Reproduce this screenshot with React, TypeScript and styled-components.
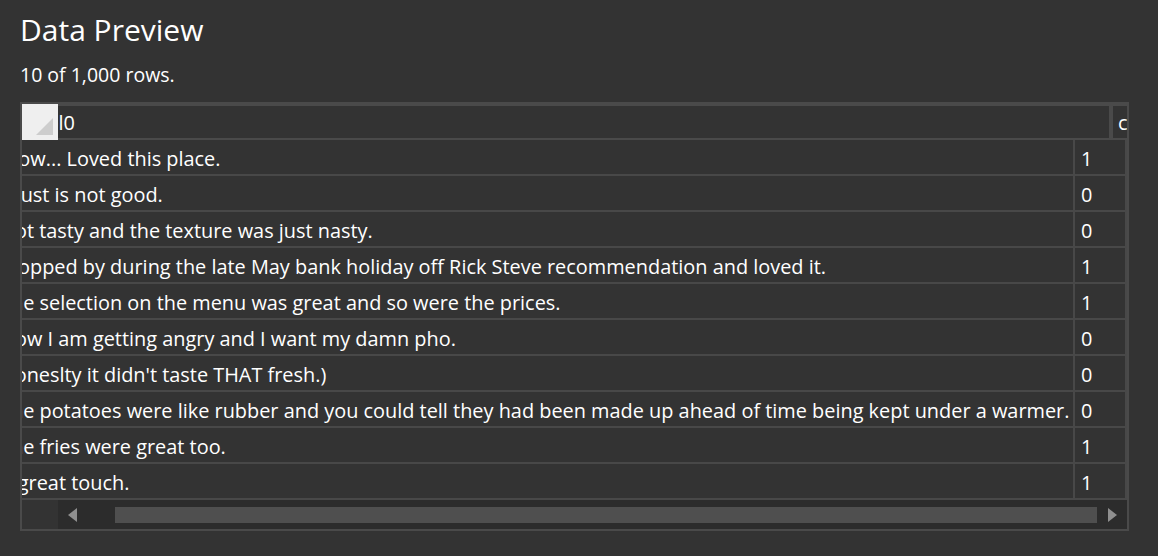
import * as React from "react";
import styled, { createGlobalStyle } from "styled-components";

const GlobalStyle = createGlobalStyle`
  body {
    margin: 0;
    background: #333333;
    color: #ffffff;
    font-family: "Open Sans", "Noto Sans", sans-serif;
  }
`;

const SPage = styled.div`
  padding: 10px 0 0 20px;
`;

const STitle = styled.h1`
  margin: 0;
  font-size: 30px;
  line-height: 40px;
  font-weight: 400;
`;

const SSubtitle = styled.p`
  margin: 12px 0 0;
  font-size: 19.5px;
  line-height: 26px;
`;

const SFrame = styled.div`
  position: relative;
  margin-top: 14px;
  width: 1109px;
  box-sizing: border-box;
  border: 2px solid #4a4a4a;
`;

const SCorner = styled.div`
  position: absolute;
  top: 0;
  left: 0;
  width: 36px;
  height: 36px;
  background: #efefef;
  z-index: 2;
  & svg {
    display: block;
  }
`;

const SViewport = styled.div`
  overflow: hidden;
`;

const SHeaderRow = styled.div`
  display: flex;
  height: 32px;
  border-top: 2px solid #4a4a4a;
  border-bottom: 2px solid #4a4a4a;
  white-space: nowrap;
  overflow: hidden;
`;

interface CellStyle {
  width: number;
  pad: number;
}

const SHeaderCell = styled.div<CellStyle>`
  flex: none;
  width: ${({ width }) => width}px;
  padding: 1px 0 0 ${({ pad }) => pad}px;
  box-sizing: border-box;
  font-size: 19.9px;
  line-height: 31px;
`;

const SHeaderDivider = styled.div`
  flex: none;
  width: 4px;
  background: #4a4a4a;
`;

const SSheet = styled.div`
  margin-left: -30px;
`;

const SRow = styled.div`
  display: flex;
  height: 34px;
  border-bottom: 2px solid #484848;
  font-size: 19.9px;
  line-height: 31px;
  white-space: nowrap;
`;

const STextCell = styled.div`
  flex: none;
  width: 1081px;
  box-sizing: border-box;
  padding: 3px 0 0 8px;
  overflow: hidden;
`;

const SValueCell = styled.div`
  flex: none;
  width: 54px;
  box-sizing: border-box;
  padding: 3px 0 0 6px;
  border-left: 2px solid #484848;
  border-right: 2px solid #484848;
`;

const SScrollBar = styled.div`
  display: flex;
  height: 29px;
`;

const SScrollGutter = styled.div`
  flex: none;
  width: 36px;
`;

const STrack = styled.div`
  flex: 1;
  display: flex;
  align-items: center;
  background: #2c2c2c;
`;

interface ArrowStyle {
  width: number;
}

const SArrowButton = styled.div<ArrowStyle>`
  flex: none;
  width: ${({ width }) => width}px;
  height: 100%;
  display: flex;
  align-items: center;
  justify-content: center;
  & svg {
    display: block;
  }
`;

const SThumbLane = styled.div`
  flex: 1;
  display: flex;
  padding-left: 28px;
`;

const SThumb = styled.div`
  flex: 1;
  height: 16px;
  background: #4f4f4f;
`;

const rows: [string, number][] = [
  ["Wow... Loved this place.", 1],
  ["Crust is not good.", 0],
  ["Not tasty and the texture was just nasty.", 0],
  ["Stopped by during the late May bank holiday off Rick Steve recommendation and loved it.", 1],
  ["The selection on the menu was great and so were the prices.", 1],
  ["Now I am getting angry and I want my damn pho.", 0],
  ["Honeslty it didn't taste THAT fresh.)", 0],
  [
    "The potatoes were like rubber and you could tell they had been made up ahead of time being kept under a warmer.",
    0,
  ],
  ["The fries were great too.", 1],
  ["A great touch.", 1],
];

const Arrow = ({ dir }: { dir: "left" | "right" }) => (
  <svg width="9" height="14" viewBox="0 0 9 14">
    <polygon points={dir === "left" ? "9,0 9,14 0,7" : "0,0 0,14 9,7"} fill="#8f8f8f" />
  </svg>
);

const App = () => (
  <>
    <GlobalStyle />
    <SPage>
      <STitle>Data Preview</STitle>
      <SSubtitle>10 of 1,000 rows.</SSubtitle>
      <SFrame>
        <SCorner>
          <svg width="36" height="36" viewBox="0 0 36 36">
            <polygon points="14,31 31,31 31,14" fill="#cdcdcd" />
          </svg>
        </SCorner>
        <SViewport>
          <SHeaderRow>
            <SHeaderCell width={1087} pad={15}>
              {"col0"}
            </SHeaderCell>
            <SHeaderDivider />
            <SHeaderCell width={80} pad={5}>
              {"col1"}
            </SHeaderCell>
          </SHeaderRow>
          <SSheet>
            {rows.map(([text, label], i) => (
              <SRow key={i}>
                <STextCell>{text}</STextCell>
                <SValueCell>{label}</SValueCell>
              </SRow>
            ))}
          </SSheet>
        </SViewport>
        <SScrollBar>
          <SScrollGutter />
          <STrack>
            <SArrowButton width={29}>
              <Arrow dir="left" />
            </SArrowButton>
            <SThumbLane>
              <SThumb />
            </SThumbLane>
            <SArrowButton width={30}>
              <Arrow dir="right" />
            </SArrowButton>
          </STrack>
        </SScrollBar>
      </SFrame>
    </SPage>
  </>
);

export default App;
